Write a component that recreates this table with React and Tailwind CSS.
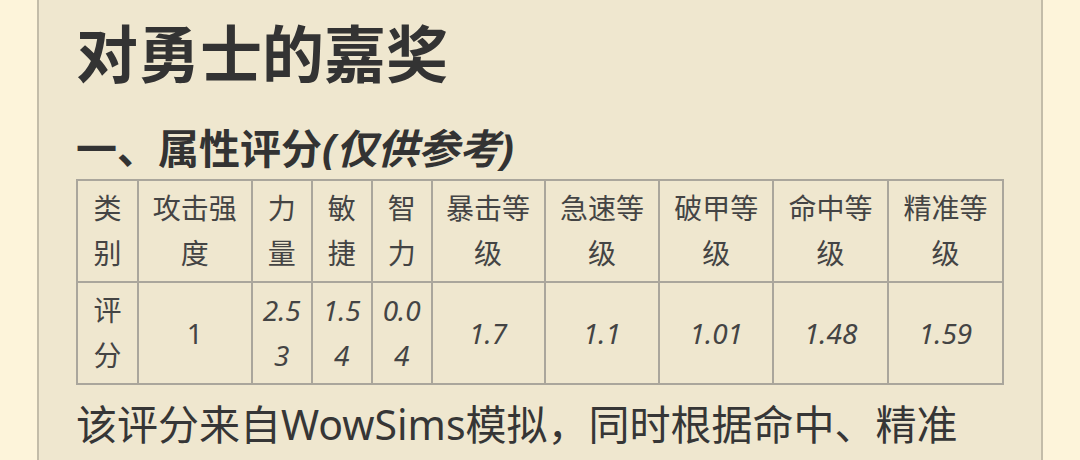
import React from "react";

const headers = [
  "类别",
  "攻击强度",
  "力量",
  "敏捷",
  "智力",
  "暴击等级",
  "急速等级",
  "破甲等级",
  "命中等级",
  "精准等级",
];
const values = ["1", "2.53", "1.54", "0.04", "1.7", "1.1", "1.01", "1.48", "1.59"];
const widths = ["w-[61px]", "w-[114px]", "w-[60px]", "w-[60px]", "w-[60px]", "w-[113px]", "w-[115px]", "w-[114px]", "w-[115px]", "w-[115px]"];

export default function App() {
  return (
    <div
      className="min-h-screen w-full bg-[#fdf4da] overflow-hidden"
      style={{ fontFamily: '"Noto Sans", "Noto Sans CJK SC", sans-serif' }}
    >
      <div className="mx-auto w-[1006px] h-[460px] bg-[#efe7cf] border-x-2 border-[#c3bca8] px-[37px] text-[#363636]">
        <h1 className="pt-[14px] text-[62px] leading-[80px] font-bold text-[#333333]">
          对勇士的嘉奖
        </h1>
        <h2 className="mt-[26px] text-[41px] leading-[56px] font-bold text-[#333333]">
          一、属性评分<em className="italic">(仅供参考)</em>
        </h2>
        <table className="mt-[3px] table-fixed border-collapse border-2 border-[#aaa69c] text-[28px] leading-[45px] text-[#444444]">
          <colgroup>
            {widths.map((w, i) => (
              <col key={i} className={w} />
            ))}
          </colgroup>
          <tbody>
            <tr>
              {headers.map((h) => (
                <td
                  key={h}
                  className="border-2 border-[#aaa69c] px-[6px] py-[5px] text-center align-middle break-all"
                >
                  {h}
                </td>
              ))}
            </tr>
            <tr>
              <td className="border-2 border-[#aaa69c] px-[6px] py-[5px] text-center align-middle break-all">
                评分
              </td>
              {values.map((v, i) => (
                <td
                  key={i}
                  className={
                    "border-2 border-[#aaa69c] px-[6px] py-[5px] text-center align-middle break-all " +
                    (i === 0 ? "" : "italic")
                  }
                >
                  {v}
                </td>
              ))}
            </tr>
          </tbody>
        </table>
        <p className="mt-[7px] text-[41px] leading-[64px] text-[#363636] whitespace-nowrap">
          该评分来自WowSims模拟，同时根据命中、精准
        </p>
      </div>
    </div>
  );
}
